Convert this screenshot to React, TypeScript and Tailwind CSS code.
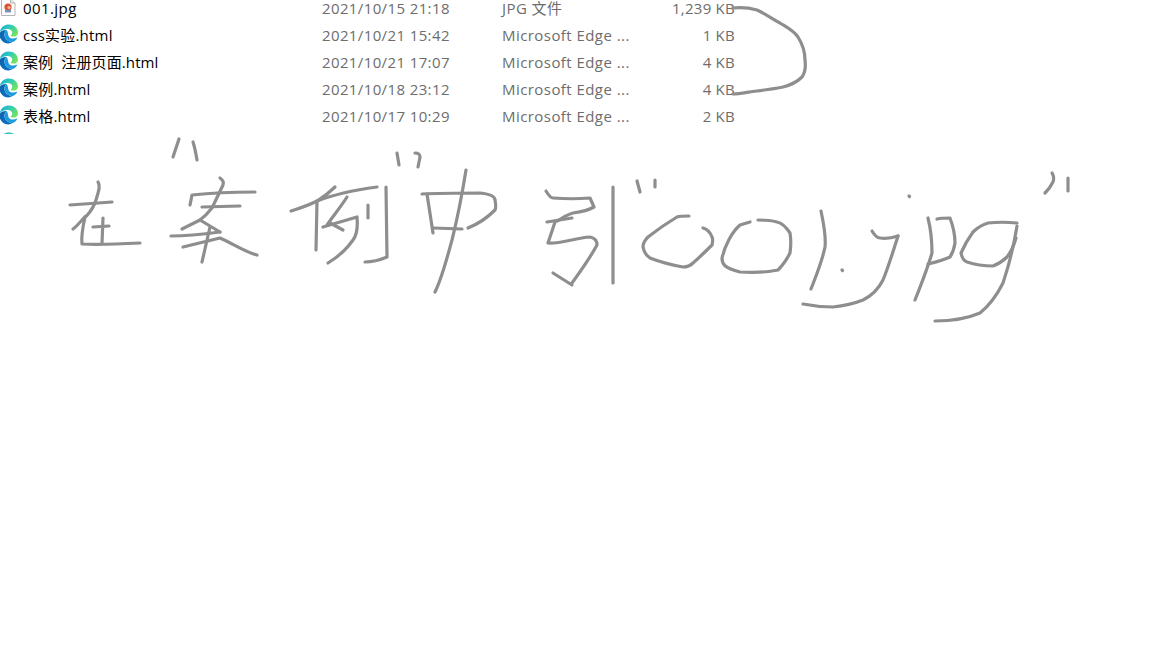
import { useId } from "react";

const rows = [
  { name: "001.jpg", date: "2021/10/15 21:18", type: "JPG 文件", size: "1,239 KB", icon: "jpg", track: "tracking-[0.42px]" },
  { name: "css实验.html", date: "2021/10/21 15:42", type: "Microsoft Edge ...", size: "1 KB", icon: "edge", track: "tracking-[0.2px]" },
  { name: "案例  注册页面.html", date: "2021/10/21 17:07", type: "Microsoft Edge ...", size: "4 KB", icon: "edge", track: "tracking-[0.12px]" },
  { name: "案例.html", date: "2021/10/18 23:12", type: "Microsoft Edge ...", size: "4 KB", icon: "edge", track: "tracking-[0.2px]" },
  { name: "表格.html", date: "2021/10/17 10:29", type: "Microsoft Edge ...", size: "2 KB", icon: "edge", track: "tracking-[0.2px]" },
  { name: "", date: "", type: "", size: "", icon: "edge", track: "" }
];

// freehand ink, page coordinates
const ink = [
  "M733 8C745 7 750 8 757 10C768 15 772 19 780 23C788 28 794 31 798 37C803 45 805 52 805 60C806 68 805 73 802 77C796 83 791 85 783 87C773 89 765 90 757 91C748 92 740 94 733 94",
  // 在
  "M70 205L112 202",
  "M98 182C100 185 100 188 95 203C92 210 87 216 85 217C80 222 77 226 73 229",
  "M85 217C83 226 81 236 82 244C100 245 120 244 140 243",
  "M103 218L102 243",
  "M93 227L109 226",
  // 案
  "M179 139L173 157",
  "M193 142C195 148 196 154 197 160",
  "M220 178C223 180 224 182 223 185L212 208C208 213 204 217 200 220L220 232",
  "M190 205L192 195C210 193 235 192 255 192",
  "M202 207L240 206",
  "M182 229L200 220",
  "M171 236C190 236 205 234 220 232",
  "M183 247L220 238C232 243 245 252 257 255",
  "M210 227L202 262",
  // 例
  "M291 211C300 208 310 205 317 201C325 196 330 192 335 187",
  "M317 201C335 194 355 190 377 187",
  "M317 201L316 250",
  "M347 197C340 208 333 216 327 225",
  "M323 227L357 217C358 228 356 236 353 240C346 250 338 257 328 263",
  "M330 223L343 230",
  "M368 205L368 218",
  "M386 187L387 257C380 260 372 262 365 262",
  "M397 153L399 165",
  "M415 153C419 153 420 155 420 157L418 167",
  // 中
  "M422 194C440 193 460 193 480 193C490 194 495 196 495 200C496 205 496 208 495 210C488 217 478 224 468 228",
  "M427 194L433 233",
  "M433 228L462 229",
  "M466 170C462 195 457 220 452 240C447 258 442 278 435 292",
  // 引
  "M546 191C549 196 551 198 553 198C565 199 578 199 590 198L594 207C587 211 580 212 573 213C566 215 561 219 557 221",
  "M547 222L572 218",
  "M555 222L548 243C560 244 575 238 590 237C595 238 597 241 597 245C590 258 580 272 572 283",
  "M553 273L572 285",
  "M613 187L613 283",
  "M637 181L640 192",
  "M655 180L655 187",
  // 0 0
  "M689 216C683 216 680 216 677 217C667 223 657 230 648 237C644 241 643 244 643 247C644 252 647 256 650 258C660 262 672 265 683 267C688 267 691 265 693 263C700 257 706 251 712 245C713 241 713 239 712 237C710 232 707 229 703 228",
  "M750 222L740 225C732 232 725 245 722 258C722 264 724 268 740 272C755 273 768 272 778 270C783 265 787 259 790 253C791 246 791 239 790 233C786 227 782 223 777 222C770 220 764 220 758 220",
  // 1
  "M821 211C824 225 826 238 825 247C822 262 816 276 811 289",
  "M842 270L842.5 270.5",
  "M909 196L909.5 196.5",
  // j
  "M872 231C875 236 878 238 880 238C886 239 892 238 898 236",
  "M898 236C893 252 888 268 883 280C878 290 871 296 863 300C853 304 843 306 833 307C823 307 813 306 803 304",
  // p
  "M928 218C931 230 932 242 932 253C927 270 921 285 915 300",
  "M937 219C941 218 946 218 950 218C953 226 955 235 955 243C954 250 952 254 950 257C944 260 936 262 928 264",
  // g
  "M1017 223C1007 222 997 222 988 223C982 225 977 228 973 232C968 239 964 246 961 253C962 258 964 261 967 262C976 265 985 266 993 266C998 264 1003 261 1007 257C1011 252 1014 245 1016 238",
  "M1017 226C1014 245 1009 265 1003 283C997 295 990 305 980 313C966 319 950 321 935 321",
  "M1052 173C1054 176 1054 179 1053 182C1051 186 1048 190 1045 193",
  "M1068 178L1068 191"
];

function EdgeIcon() {
  const id = useId();
  return (
    <svg viewBox="0 0 20 20" className="ml-[-1px] h-[20px] w-[20px] shrink-0">
      <defs>
        <linearGradient id={id + "a"} x1="0" y1="0" x2="1" y2="0.6">
          <stop offset="0" stopColor="#12a5dc" />
          <stop offset="0.5" stopColor="#2fcbb8" />
          <stop offset="1" stopColor="#72e35e" />
        </linearGradient>
        <linearGradient id={id + "b"} x1="0" y1="0" x2="1" y2="1">
          <stop offset="0" stopColor="#0a62ad" />
          <stop offset="1" stopColor="#0f74c4" />
        </linearGradient>
      </defs>
      <path
        d="M0.5 8.6C1.4 3.6 5 0.4 9.8 0.4C14.8 0.4 19 3.8 19 8.4C19 11 17 12.6 14.6 12.6C13 12.6 11.9 12.1 11.6 11.5C13 10.5 13.4 9.3 13.2 8.1C12.6 5.4 9.9 4.6 7.4 5C4 5.5 1.8 6.6 0.5 8.6Z"
        fill={`url(#${id}a)`}
      />
      <path
        d="M0.4 9.2C2 6.6 5 5.7 7.6 6C6 7.4 5 9.7 5.6 12C6.4 15.6 9.6 18 13.6 18C12 19 10.4 19.5 9 19.4C3.8 19.4 0 14.7 0.4 9.2Z"
        fill={`url(#${id}b)`}
      />
      <path
        d="M7.6 6C9 7.6 8.8 10 9.6 12.2C10.8 14.8 14.6 15.2 18.4 13.4C17.4 15.8 15.6 17.6 13.6 18C9.6 18 6.4 15.6 5.6 12C5 9.7 6 7.4 7.6 6Z"
        fill="#1f9bdc"
      />
    </svg>
  );
}

function JpgIcon() {
  return (
    <svg viewBox="0 0 16 17" className="h-[17px] w-[16px] shrink-0">
      <path d="M1.5 0.5H10.5L15 4V16.5H1.5Z" fill="#fbfbfb" stroke="#b5b5b5" />
      <path d="M10.5 0.5V4H15" fill="#e8e8e8" stroke="#b5b5b5" />
      <circle cx="8" cy="8" r="3.6" fill="#d9532f" />
      <circle cx="9" cy="8.5" r="1.6" fill="#f3b59c" />
      <rect x="5" y="11" width="6" height="2.4" fill="#6f94bf" />
    </svg>
  );
}

export default function App() {
  return (
    <div className="relative h-[647px] w-full overflow-hidden bg-white font-['Open_Sans','Noto_Sans_CJK_SC',sans-serif] text-[15px]">
      <div className="h-[134px] overflow-hidden">
        <div className="mt-[-5px] flex flex-col">
          {rows.map((r, i) => (
            <div key={i} className="flex h-[27px] items-center">
              <div className="flex w-[322px] items-center">
                <div className="mb-[3px] flex w-[23px] shrink-0">
                  {r.icon === "jpg" ? <JpgIcon /> : <EdgeIcon />}
                </div>
                <span className={"whitespace-pre text-black " + r.track}>{r.name}</span>
              </div>
              <span className="w-[180px] whitespace-nowrap tracking-[0.38px] text-[#6d6d6d]">{r.date}</span>
              <span className="w-[133px] whitespace-nowrap tracking-[0.44px] text-[#6d6d6d]">{r.type}</span>
              <span className="w-[100px] whitespace-nowrap text-right tracking-[0.25px] text-[#6d6d6d]">{r.size}</span>
            </div>
          ))}
        </div>
      </div>
      <svg
        viewBox="0 0 1152 647"
        role="img"
        aria-label="在“案例”中引“001.jpg”"
        className="pointer-events-none absolute inset-0 h-[647px] w-[1152px] blur-[0.7px]"
        fill="none"
        stroke="#8e8e8e"
        strokeWidth="3.2"
        strokeLinecap="round"
        strokeLinejoin="round"
      >
        {ink.map((d, i) => (
          <path key={i} d={d} />
        ))}
      </svg>
    </div>
  );
}
